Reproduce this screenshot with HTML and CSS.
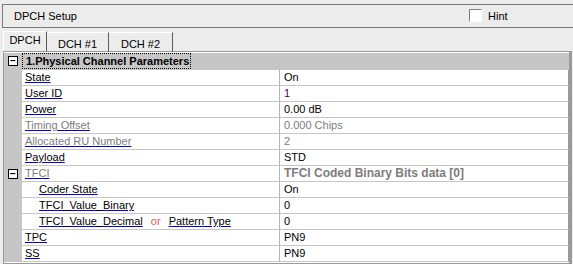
FILE: index.html
```html
<!DOCTYPE html>
<html lang="en">
<head>
  <meta charset="UTF-8" />
  <title>DPCH Setup</title>
  <link rel="stylesheet" href="styles.css">
</head>
<body>

  <!-- Title bar -->
  <div class="setup-bar">
    <span class="setup-title">DPCH Setup</span>
    <label class="hint"><span class="check"></span>Hint</label>
  </div>

  <!-- Tabs -->
  <div class="tabs">
    <div class="tab active">DPCH</div>
    <div class="tab">DCH #1</div>
    <div class="tab">DCH #2</div>
  </div>

  <!-- Parameter grid -->
  <div class="grid-frame">
    <div class="row section">
      <div class="gutter"><span class="toggle">&minus;</span></div>
      <div class="section-title"><span class="focus">1.Physical Channel Parameters</span></div>
    </div>

    <div class="row">
      <div class="gutter"></div>
      <div class="name"><a>State</a></div>
      <div class="value">On</div>
    </div>
    <div class="row">
      <div class="gutter"></div>
      <div class="name"><a>User ID</a></div>
      <div class="value purple">1</div>
    </div>
    <div class="row">
      <div class="gutter"></div>
      <div class="name"><a>Power</a></div>
      <div class="value">0.00 dB</div>
    </div>
    <div class="row">
      <div class="gutter"></div>
      <div class="name disabled"><a>Timing Offset</a></div>
      <div class="value disabled">0.000 Chips</div>
    </div>
    <div class="row">
      <div class="gutter"></div>
      <div class="name disabled"><a>Allocated RU Number</a></div>
      <div class="value disabled">2</div>
    </div>
    <div class="row">
      <div class="gutter"></div>
      <div class="name"><a>Payload</a></div>
      <div class="value">STD</div>
    </div>
    <div class="row">
      <div class="gutter"><span class="toggle">&minus;</span></div>
      <div class="name disabled"><a>TFCI</a></div>
      <div class="value disabled bold">TFCI Coded Binary Bits data [0]</div>
    </div>
    <div class="row">
      <div class="gutter"></div>
      <div class="name sub"><a>Coder State</a></div>
      <div class="value">On</div>
    </div>
    <div class="row">
      <div class="gutter"></div>
      <div class="name sub"><a>TFCI_Value_Binary</a></div>
      <div class="value">0</div>
    </div>
    <div class="row">
      <div class="gutter"></div>
      <div class="name sub"><a>TFCI_Value_Decimal</a> <span class="or">or</span> <a>Pattern Type</a></div>
      <div class="value">0</div>
    </div>
    <div class="row">
      <div class="gutter"></div>
      <div class="name"><a>TPC</a></div>
      <div class="value">PN9</div>
    </div>
    <div class="row">
      <div class="gutter"></div>
      <div class="name"><a>SS</a></div>
      <div class="value">PN9</div>
    </div>
  </div>

</body>
</html>
```

FILE: styles.css
```css
body {
  margin: 0;
  background: #ececec;
  font-family: "Liberation Sans", Arial, sans-serif;
  font-size: 11px;
  color: #000;
}

/* Title bar */
.setup-bar {
  margin: 4px 0 0 2px;
  height: 22px;
  border: 1px solid #7a7a7a;
  border-right: none;
  display: flex;
  align-items: center;
  position: relative;
}

.setup-title {
  margin-left: 11px;
}

.hint {
  position: absolute;
  left: 466px;
  top: 4px;
  display: flex;
  align-items: center;
  gap: 6px;
}

.check {
  width: 11px;
  height: 11px;
  background: #fff;
  border: 1px solid;
  border-color: #808080 #fff #fff #808080;
}

/* Tabs */
.tabs {
  display: flex;
  height: 20px;
  margin: 3px 0 0 3px;
}

.tab {
  padding: 5px 0 0 0;
  text-align: center;
  border-right: 1px solid #5a5a5a;
  border-top: 1px solid #fff;
  height: 14px;
  margin-top: 1px;
}

.tab:nth-child(1) { width: 42px; border-left: 1px solid #fff; padding-top: 2px; height: 17px; margin-top: 0; }
.tab:nth-child(2) { width: 61px; }
.tab:nth-child(3) { width: 63px; }

/* Grid */
.grid-frame {
  margin: 0 1px 0 3px;
  border: 1px solid #9a9a9a;
  border-right-width: 3px;
  border-bottom-width: 2px;
  padding: 1px 0 1px 0;
  background: #fff;
}

.row {
  display: flex;
  height: 16px;
  line-height: 15px;
  background: #fff;
}

.gutter {
  width: 18px;
  flex: none;
  background: #c6c6c6;
  position: relative;
}

.toggle {
  position: absolute;
  left: 4px;
  top: 3px;
  width: 8px;
  height: 8px;
  border: 1px solid #000;
  background: #fff;
  font-size: 10px;
  line-height: 7px;
  text-align: center;
  font-weight: bold;
}

.section {
  background: #c6c6c6;
  height: 17px;
  line-height: 16px;
}

.section-title {
  flex: 1;
  font-weight: bold;
  border-bottom: 1px solid #c6c6c6;
}

.focus {
  border: 1px dotted #000;
  padding: 0 1px 0 3px;
  display: inline-block;
  line-height: 14px;
}

.name {
  width: 254px;
  flex: none;
  padding-left: 3px;
  border-right: 1px solid #b4b4b4;
  border-bottom: 1px solid #c6c6c6;
  white-space: nowrap;
}

.name a {
  color: #000;
  text-decoration: underline;
  text-decoration-color: #0000e0;
}

.name.sub {
  padding-left: 17px;
  width: 240px;
}

.name.disabled a {
  color: #7d7d7d;
}

.or {
  color: #e25555;
  margin: 0 5px;
}

.value {
  flex: 1;
  padding-left: 4px;
  border-bottom: 1px solid #c6c6c6;
  border-right: 1px solid #9a9a9a;
}

.value.disabled { color: #7d7d7d; }
.value.bold { font-weight: bold; font-size: 12px; }
.value.purple { color: #500050; }
```
